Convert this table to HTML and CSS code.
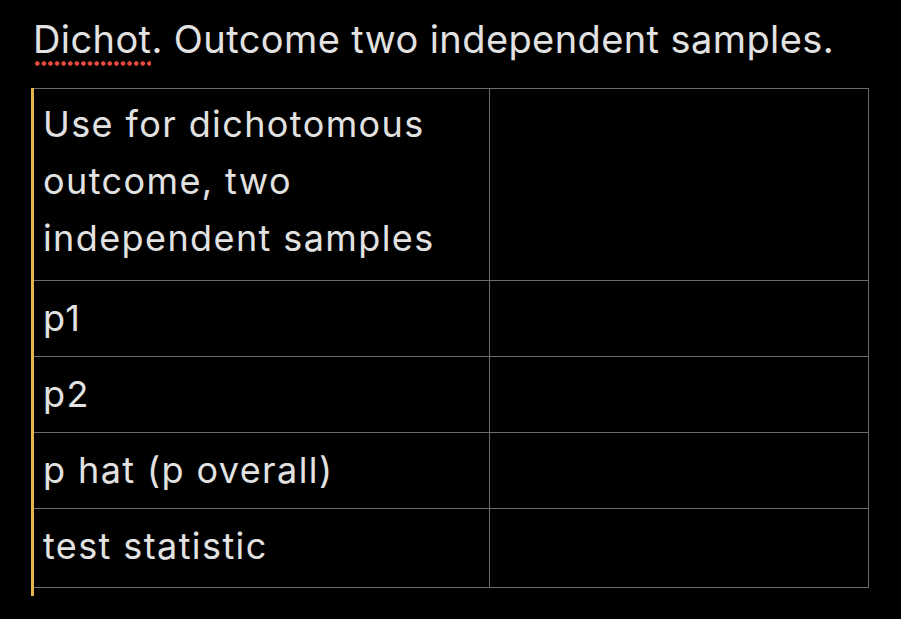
FILE: index.html
```html
<!DOCTYPE html>
<html>
<head>
<meta charset="utf-8">
<link rel="stylesheet" href="styles.css">
</head>
<body>
<div class="page">
  <h1 class="title"><span class="misspelled">Dichot</span>. Outcome two independent samples.</h1>
  <div class="block">
    <table class="grid">
      <colgroup><col class="c1"><col class="c2"></colgroup>
      <tr><td>Use for dichotomous outcome, two independent samples</td><td></td></tr>
      <tr><td>p1</td><td></td></tr>
      <tr><td>p2</td><td></td></tr>
      <tr><td>p hat (p overall)</td><td></td></tr>
      <tr><td>test statistic</td><td></td></tr>
    </table>
  </div>
</div>
</body>
</html>
```
FILE: styles.css
```css
html, body {
  margin: 0;
  padding: 0;
  background: #000;
}
body {
  width: 901px;
  height: 619px;
  overflow: hidden;
  font-family: Inter, "Noto Sans", sans-serif;
  color: #e2e2e2;
}
.page {
  padding: 13px 0 0 31px;
}
.title {
  margin: 0 0 0 2px;
  font-size: 38px;
  font-weight: 400;
  line-height: 52px;
  height: 75px;
  letter-spacing: 0.4px;
}
.misspelled {
  background-image: radial-gradient(circle, #ea4a3e 2px, rgba(234, 74, 62, 0) 2.4px);
  background-size: 6.6px 5px;
  background-repeat: repeat-x;
  background-position: 1px 45px;
  padding-bottom: 6px;
}
.block {
  border-left: 3px solid #e3b54a;
  padding-bottom: 8px;
  width: 834px;
}
.grid {
  border-collapse: collapse;
  width: 834px;
  table-layout: fixed;
}
.c1 { width: 455px; }
.c2 { width: 379px; }
.grid td {
  border: 1px solid #6b6b6b;
  border-left: none;
  font-size: 36px;
  letter-spacing: 1.4px;
  line-height: 57px;
  padding: 9px 30px 9px 9px;
  vertical-align: top;
}
.grid td + td {
  border-left: 1px solid #6b6b6b;
}
.grid tr:first-child td {
  padding-top: 7px;
  padding-bottom: 13px;
}
.grid tr:last-child td {
  padding-bottom: 12px;
}
```
